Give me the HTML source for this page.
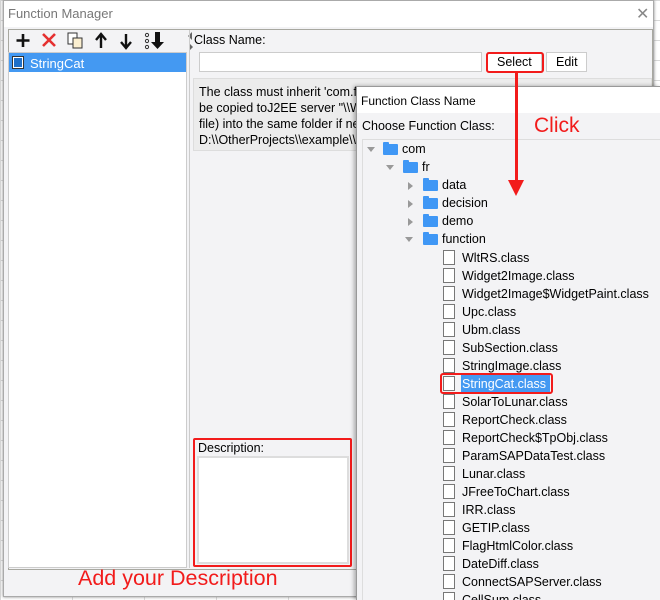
<!DOCTYPE html>
<html><head><style>
*{margin:0;padding:0;box-sizing:border-box}
html,body{width:660px;height:600px;overflow:hidden}
body{background:#fff;font-family:"Liberation Sans",sans-serif;font-size:12px;color:#000;position:relative}
.abs{position:absolute}
.grid{background-image:linear-gradient(#d8d8d8 1px,transparent 1px),linear-gradient(90deg,#d8d8d8 1px,transparent 1px);background-size:72px 20px}
.t{position:absolute;white-space:nowrap;font-size:12.5px}
.fold{position:absolute;width:15px;height:11px;background:#3f97f5;border-radius:1px}
.fold:before{content:"";position:absolute;left:0;top:-2px;width:6px;height:3px;background:#3f97f5;border-radius:1px 1px 0 0}
.file{position:absolute;width:12px;height:15px;border:1px solid #777;background:#fff}
.tri-d{position:absolute;width:0;height:0;border-left:4px solid transparent;border-right:4px solid transparent;border-top:5px solid #999}
.tri-r{position:absolute;width:0;height:0;border-top:4px solid transparent;border-bottom:4px solid transparent;border-left:5px solid #999}
</style></head><body>
<div class="abs grid" style="left:0;top:0;width:660px;height:600px"></div>
<div class="abs" style="left:3px;top:0;width:651px;height:597px;background:#f3f3f5;border:1px solid #aaa;box-shadow:0 0 3px #888">
  <div class="abs" style="left:0;top:0;width:649px;height:26px;background:#fff"></div>
  <div class="t" style="left:4px;top:5px;color:#777;font-size:13px">Function Manager</div>
  <div class="t" style="left:632px;top:3px;color:#888;font-size:16px">✕</div>
  <div class="abs" style="left:4px;top:28px;width:645px;height:541px;border:1px solid #a8a8a0"></div>
</div>
<div class="abs" style="left:8px;top:52px;width:179px;height:516px;background:#fff;border:1px solid #ccc"></div>
<div class="abs" style="left:9px;top:53px;width:177px;height:19px;background:#4499f2"></div>
<div class="abs" style="left:12px;top:56px;width:12px;height:13px;background:#fff;border:1px solid #333"><div class="abs" style="left:1px;top:1px;width:8px;height:9px;background:#1e6fc8"></div></div>
<div class="t" style="left:30px;top:56px;color:#fff;font-size:13px">StringCat</div>
<svg class="abs" style="left:10px;top:30px" width="170" height="20" viewBox="0 0 170 20">
  <path d="M13 4v13M6.5 10.5h13" stroke="#111" stroke-width="2.6"/>
  <path d="M33 4l12 12M45 4l-12 12" stroke="#e53030" stroke-width="2.6"/>
  <rect x="58" y="3" width="9" height="11" fill="#fff" stroke="#333"/>
  <rect x="63" y="8" width="9" height="10" fill="#fbefd0" stroke="#333"/>
  <path d="M91 5v13M86 10l5-6 5 6" stroke="#111" stroke-width="2.4" fill="none"/>
  <path d="M116 4v13M111 12l5 6 5-6" stroke="#111" stroke-width="2.4" fill="none"/>
  <circle cx="137" cy="5" r="1.6" fill="none" stroke="#333"/><circle cx="137" cy="11" r="1.6" fill="none" stroke="#333"/><circle cx="137" cy="17" r="1.6" fill="none" stroke="#333"/>
  <path d="M145 2h5v10h4l-6.5 7-6.5-7h4z" fill="#111"/>
</svg>
<div class="abs" style="left:188px;top:32px;width:0;height:0;border-top:4px solid transparent;border-bottom:4px solid transparent;border-right:4px solid #666"></div>
<div class="abs" style="left:189px;top:43px;width:0;height:0;border-top:4px solid transparent;border-bottom:4px solid transparent;border-left:4px solid #666"></div>
<div class="abs" style="left:189px;top:30px;width:1px;height:538px;background:#ccc"></div>
<div class="t" style="left:194px;top:33px">Class Name:</div>
<div class="abs" style="left:199px;top:52px;width:283px;height:20px;background:#fff;border:1px solid #ccc"></div>
<div class="abs" style="left:487px;top:52px;width:55px;height:20px;background:#fff;border:1px solid #ccc"></div>
<div class="abs" style="left:486px;top:52px;width:58px;height:21px;border:2px solid #f21b1b;border-radius:3px"></div>
<div class="t" style="left:497px;top:55px">Select</div>
<div class="abs" style="left:546px;top:52px;width:41px;height:20px;background:#fff;border:1px solid #ccc"></div>
<div class="t" style="left:556px;top:55px">Edit</div>
<div class="abs" style="left:193px;top:78px;width:459px;height:73px;background:#ececec;border:1px solid #ddd"></div>
<div class="t" style="left:199px;top:84px;line-height:16px">The class must inherit 'com.fr.script.AbstractFunction'. The compiled class should<br>be copied toJ2EE server "\\WEB-INF\\classes" folder (along with any used jar<br>file) into the same folder if necessary, for example<br>D:\\OtherProjects\\example\\WEB-INF\\classes</div>
<div class="t" style="left:198px;top:441px">Description:</div>
<div class="abs" style="left:197px;top:456px;width:152px;height:108px;background:#fff;border:2px solid #ddd"></div>
<div class="abs" style="left:193px;top:438px;width:159px;height:129px;border:2px solid #f21b1b;border-radius:2px"></div>
<div class="t" style="left:78px;top:566px;color:#f21b1b;font-size:21.5px">Add your Description</div>
<div class="abs" style="left:356px;top:86px;width:304px;height:514px;background:#f3f3f5;border-left:1px solid #999;border-top:1px solid #999;box-shadow:-2px 0 4px rgba(0,0,0,.3)">
  <div class="abs" style="left:0;top:0;width:304px;height:26px;background:#fff"></div>
  <div class="t" style="left:4px;top:7px;font-size:12px">Function Class Name</div>
  <div class="t" style="left:5px;top:32px">Choose Function Class:</div>
  <div class="abs" style="left:5px;top:52px;width:300px;height:462px;border:1px solid #ddd;border-bottom:none"></div>
</div>
<div class="t" style="left:534px;top:114px;color:#f21b1b;font-size:21px">Click</div>
<div class="abs" style="left:515px;top:73px;width:3px;height:110px;background:#f21b1b"></div>
<div class="abs" style="left:508px;top:180px;width:0;height:0;border-left:8px solid transparent;border-right:8px solid transparent;border-top:16px solid #f21b1b"></div>
<div class="tri-d" style="left:367px;top:147px"></div><div class="fold" style="left:383px;top:144px"></div><div class="t" style="left:402px;top:142px">com</div>
<div class="tri-d" style="left:386px;top:165px"></div><div class="fold" style="left:403px;top:162px"></div><div class="t" style="left:422px;top:160px">fr</div>
<div class="tri-r" style="left:408px;top:182px"></div><div class="fold" style="left:423px;top:180px"></div><div class="t" style="left:442px;top:178px">data</div>
<div class="tri-r" style="left:408px;top:200px"></div><div class="fold" style="left:423px;top:198px"></div><div class="t" style="left:442px;top:196px">decision</div>
<div class="tri-r" style="left:408px;top:218px"></div><div class="fold" style="left:423px;top:216px"></div><div class="t" style="left:442px;top:214px">demo</div>
<div class="tri-d" style="left:405px;top:237px"></div><div class="fold" style="left:423px;top:234px"></div><div class="t" style="left:442px;top:232px">function</div>
<div class="abs" style="left:461px;top:375px;width:89px;height:17px;background:#4499f2"></div>
<div class="abs" style="left:440px;top:373px;width:113px;height:21px;border:2px solid #f21b1b;border-radius:3px"></div>
<div id="files"></div>
<script>
var n=["WltRS.class","Widget2Image.class","Widget2Image$WidgetPaint.class","Upc.class","Ubm.class","SubSection.class","StringImage.class","StringCat.class","SolarToLunar.class","ReportCheck.class","ReportCheck$TpObj.class","ParamSAPDataTest.class","Lunar.class","JFreeToChart.class","IRR.class","GETIP.class","FlagHtmlColor.class","DateDiff.class","ConnectSAPServer.class","CellSum.class"];
var h="";n.forEach(function(s,i){var y=250+18*i;h+='<div class="file" style="left:443px;top:'+y+'px"></div><div class="t" style="left:462px;top:'+(y+1)+'px;'+(i==7?'color:#fff':'')+'">'+s+'</div>';});
document.getElementById("files").innerHTML=h;
</script>
</body></html>
